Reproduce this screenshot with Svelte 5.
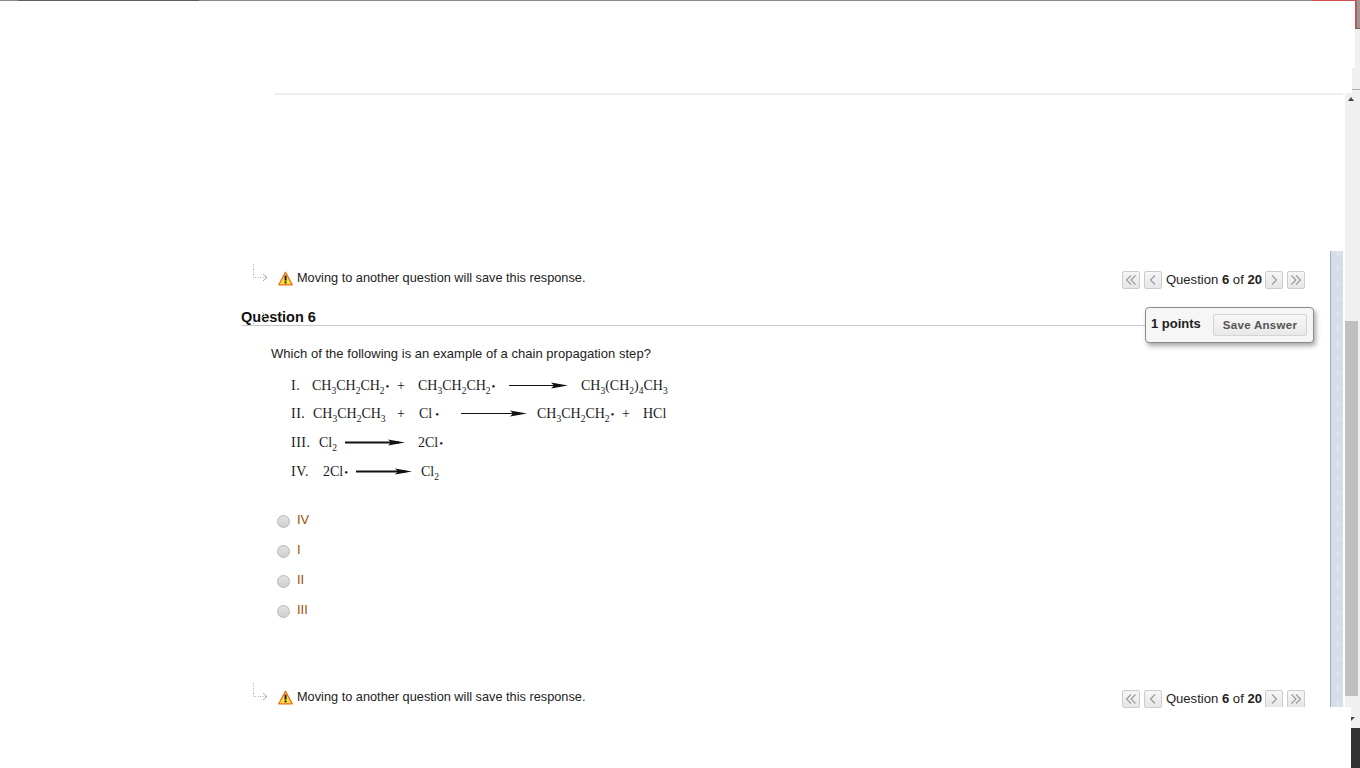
<script>
  const options = ['IV', 'I', 'II', 'III'];
</script>

{#snippet arrow(w, sw)}
  <svg class="arrow" width={w} height="9" viewBox="0 0 {w} 9" aria-hidden="true">
    <line x1="0" y1="4.5" x2={w - 6} y2="4.5" stroke="#111" stroke-width={sw} />
    <path d="M{w - 17} 1.5 L{w} 4.5 L{w - 17} 7.5 L{w - 14} 4.5 Z" fill="#111" />
  </svg>
{/snippet}

{#snippet nav()}
  <div class="nav">
    <div class="warn">
      <svg class="elbow" width="16" height="20" viewBox="0 0 16 20" aria-hidden="true">
        <path d="M1.5 0 V13.5 H14" fill="none" stroke="#aaa" stroke-dasharray="1 1.5" />
        <path d="M11 10 L15 13.5 L11 17" fill="none" stroke="#aaa" />
      </svg>
      <svg class="tri" width="15" height="15" viewBox="0 0 15 15" aria-hidden="true">
        <path d="M7.5 1.2 L14.2 13.8 H0.8 Z" fill="#ffdf3c" stroke="#ee6a1a" stroke-width="1.3" stroke-linejoin="round" />
        <rect x="6.6" y="4.6" width="1.9" height="5" fill="#111" />
        <rect x="6.6" y="10.5" width="1.9" height="1.9" fill="#111" />
      </svg>
      <span>Moving to another question will save this response.</span>
    </div>
    <div class="pager">
      <button class="pg" aria-label="First">
        <svg width="12" height="12" viewBox="0 0 12 12"><path d="M6 1.5 L1.5 6 L6 10.5 M10.5 1.5 L6 6 L10.5 10.5" fill="none" stroke="#999" stroke-width="1.1" /></svg>
      </button>
      <button class="pg" aria-label="Previous">
        <svg width="12" height="12" viewBox="0 0 12 12"><path d="M8 1.5 L3.5 6 L8 10.5" fill="none" stroke="#999" stroke-width="1.1" /></svg>
      </button>
      <span class="count">Question <b>6</b> of <b>20</b></span>
      <button class="pg" aria-label="Next">
        <svg width="12" height="12" viewBox="0 0 12 12"><path d="M4 1.5 L8.5 6 L4 10.5" fill="none" stroke="#999" stroke-width="1.1" /></svg>
      </button>
      <button class="pg" aria-label="Last">
        <svg width="12" height="12" viewBox="0 0 12 12"><path d="M1.5 1.5 L6 6 L1.5 10.5 M6 1.5 L10.5 6 L6 10.5" fill="none" stroke="#999" stroke-width="1.1" /></svg>
      </button>
    </div>
  </div>
{/snippet}

<div class="page">
  <div class="topline"></div>
  <div class="rule"></div>

  <main class="main">
    {@render nav()}

    <div class="qhead">
      <h2 class="qtitle">Question 6</h2>
      <div class="points">
        <strong>1 points</strong>
        <button class="save">Save Answer</button>
      </div>
    </div>

    <p class="qtext">Which of the following is an example of a chain propagation step?</p>

    <div class="chem">
      <div class="row r1">
        <span>I.</span><span>CH<sub>3</sub>CH<sub>2</sub>CH<sub>2</sub><i>•</i></span><span>+</span><span>CH<sub>3</sub>CH<sub>2</sub>CH<sub>2</sub><i>•</i></span>
        {@render arrow(59, 1)}
        <span>CH<sub>3</sub>(CH<sub>2</sub>)<sub>4</sub>CH<sub>3</sub></span>
      </div>
      <div class="row r2">
        <span>II.</span><span>CH<sub>3</sub>CH<sub>2</sub>CH<sub>3</sub></span><span>+</span><span>Cl<i class="far">•</i></span>
        {@render arrow(66, 1)}
        <span>CH<sub>3</sub>CH<sub>2</sub>CH<sub>2</sub><i>•</i></span><span>+</span><span>HCl</span>
      </div>
      <div class="row r3">
        <span>III.</span><span>Cl<sub>2</sub></span>
        {@render arrow(60, 2)}
        <span>2Cl<i>•</i></span>
      </div>
      <div class="row r4">
        <span>IV.</span><span>2Cl<i>•</i></span>
        {@render arrow(56, 2)}
        <span>Cl<sub>2</sub></span>
      </div>
    </div>

    <ul class="options">
      {#each options as o}
        <li><input type="radio" name="q6" aria-label={o} /><label for="">{o}</label></li>
      {/each}
    </ul>

    {@render nav()}
  </main>

  <!-- stray dotted fragment lying over the question title -->
  <svg class="stray" width="16" height="16" viewBox="0 0 16 16" aria-hidden="true">
    <path d="M1.5 8 V15" fill="none" stroke="#999" stroke-dasharray="1 1.5" />
    <path d="M10 2 L13 5 L10 8" fill="none" stroke="#bbb" />
  </svg>

  <!-- browser and frame remnants at the right edge -->
  <div class="track"></div>
  <div class="strip">
    <svg width="13" height="456" aria-hidden="true">
      <defs>
        <pattern id="plus" width="13" height="15" patternUnits="userSpaceOnUse">
          <path d="M8 -1 V6 M4.5 2.5 H11.5" stroke="#dfe4ec" stroke-width="2" />
          <path d="M8 14 V16 M4.5 17.5 H11.5" stroke="#dfe4ec" stroke-width="2" />
        </pattern>
      </defs>
      <rect width="13" height="456" fill="#d5dde9" />
      <rect width="13" height="456" fill="url(#plus)" />
      <rect width="1" height="456" fill="#a9aeb6" />
    </svg>
  </div>
  <div class="thumb"></div>
  <div class="corner"></div>
  <div class="redtop"></div>
  <div class="redside"></div>
  <div class="notch"></div>
  <div class="greyline"></div>
  <div class="up"></div>
  <div class="foot"></div>
  <div class="down"></div>
  <div class="dark"></div>
</div>

<style>
  :global(body) {
    margin: 0;
    background: #fff;
  }
  .page {
    position: relative;
    width: 1360px;
    height: 768px;
    overflow: hidden;
    background: #fff;
    font-family: "Liberation Sans", Arial, sans-serif;
    font-size: 13px;
    color: #222;
  }
  .topline {
    height: 1px;
    background: linear-gradient(to right, #8a8a8a 18px, #5f5f5f 18px, #5f5f5f 199px, #8a8a8a 199px);
  }
  .rule {
    height: 2px;
    margin: 92px 0 0 274px;
    width: 1069px;
    background: #efefef;
  }
  .main {
    width: 1073px;
    margin: 175px 0 0 241px;
  }
  .nav {
    display: flex;
    justify-content: space-between;
    height: 20px;
    padding: 0 9px 0 11px;
  }
  .warn {
    display: flex;
    align-items: flex-start;
    line-height: 15px;
  }
  .warn span {
    margin: 0 0 0 4px;
    font-size: 12.75px;
  }
  .elbow {
    margin: -6px 10px 0 0;
  }
  .tri {
    margin-top: 1px;
  }
  .pager {
    display: flex;
    align-items: center;
    gap: 4px;
  }
  .count {
    margin-top: -1px;
    margin-right: -1px;
    font-size: 13.1px;
    white-space: nowrap;
  }
  .count b {
    font-weight: 700;
  }
  .pg {
    box-sizing: border-box;
    display: flex;
    align-items: center;
    justify-content: center;
    width: 18px;
    height: 18px;
    padding: 0;
    border: 1px solid #ccc;
    border-radius: 2px;
    background: linear-gradient(#f6f6f6, #e6e6e6);
  }
  .qhead {
    display: flex;
    align-items: flex-start;
    height: 36px;
    margin-top: 17px;
  }
  .qtitle {
    flex: 1;
    margin: 3px 0 0;
    height: 15px;
    border-bottom: 1px solid #c8c8c8;
    font-size: 14.5px;
    line-height: 15px;
    font-weight: 700;
    color: #111;
  }
  .points {
    box-sizing: border-box;
    display: flex;
    align-items: center;
    justify-content: space-between;
    width: 169px;
    height: 36px;
    padding: 0 6px 0 5px;
    border: 1px solid #8c8c8c;
    border-radius: 4px;
    background: #f6f6f6;
    box-shadow: 2px 3px 5px rgba(0, 0, 0, 0.35);
    color: #222;
  }
  .points strong {
    font-size: 13px;
    margin-top: -4px;
  }
  .save {
    box-sizing: border-box;
    width: 94px;
    height: 22px;
    padding: 0;
    border: 1px solid #d4d4d4;
    border-radius: 2px;
    background: linear-gradient(#f7f7f7, #e9e9e9);
    font: 700 11.5px "Liberation Sans", Arial, sans-serif;
    letter-spacing: 0.3px;
    color: #555;
  }
  .qtext {
    margin: 3px 0 0 30px;
    line-height: 15px;
    letter-spacing: 0.03px;
  }
  .chem {
    margin: 10px 0 0 50px;
    font-family: "Liberation Serif", "Times New Roman", serif;
    font-size: 14px;
    color: #1c1c1c;
  }
  .row {
    display: grid;
    align-items: center;
    height: 29px;
    white-space: nowrap;
  }
  .row span:first-child {
    letter-spacing: 0.5px;
  }
  .row sub {
    font-size: 9.5px;
    line-height: 0;
  }
  .row i {
    font-style: normal;
    font-size: 11px;
    margin-left: 1px;
  }
  .row i.far {
    margin-left: 3px;
  }
  .r1 {
    grid-template-columns: 21px 85px 21px 91px 72px auto;
  }
  .r2 {
    margin-top: -1px;
    grid-template-columns: 22px 84px 22px 42px 76px 85px 21px auto;
  }
  .r3 {
    grid-template-columns: 28px 26px 73px auto;
  }
  .r4 {
    grid-template-columns: 32px 33px 65px auto;
  }
  .arrow {
    display: block;
  }
  .options {
    list-style: none;
    margin: 20px 0 0 36px;
    padding: 0;
  }
  .options li {
    display: flex;
    align-items: center;
    height: 30px;
  }
  .options input {
    appearance: none;
    box-sizing: border-box;
    width: 13px;
    height: 13px;
    margin: 1px 7px 0 0;
    border: 1px solid #b8b8b8;
    border-radius: 50%;
    background: linear-gradient(#e2e2e2, #cfcfcf);
  }
  .options label {
    margin-top: -4px;
    color: #a04e06;
  }
  .options + .nav {
    margin-top: 63px;
  }
  .stray {
    position: absolute;
    left: 252px;
    top: 310px;
  }
  .track {
    position: absolute;
    left: 1345px;
    top: 0;
    width: 15px;
    height: 768px;
    background: #f0f0f0;
  }
  .strip {
    position: absolute;
    left: 1330px;
    top: 251px;
    width: 13px;
    height: 456px;
  }
  .strip svg {
    display: block;
  }
  .thumb {
    position: absolute;
    left: 1345px;
    top: 321px;
    width: 13px;
    height: 375px;
    background: #c0bebe;
  }
  .corner {
    position: absolute;
    left: 1345px;
    top: 0;
    width: 10px;
    height: 68px;
    background: #fff;
  }
  .notch {
    position: absolute;
    left: 1345px;
    top: 68px;
    width: 7px;
    height: 25px;
    background: #fff;
  }
  .redtop {
    position: absolute;
    left: 1312px;
    top: 0;
    width: 44px;
    height: 1px;
    background: #d05050;
  }
  .redside {
    position: absolute;
    left: 1355px;
    top: 0;
    width: 5px;
    height: 28px;
    background: linear-gradient(to right, #d05050 2px, #999 2px);
    border-bottom: 1px solid #666;
    box-sizing: content-box;
  }
  .greyline {
    position: absolute;
    left: 1352px;
    top: 89px;
    width: 8px;
    height: 1px;
    background: #aaa;
  }
  .up {
    position: absolute;
    left: 1348px;
    top: 97px;
    border-left: 3.5px solid transparent;
    border-right: 3.5px solid transparent;
    border-bottom: 4px solid #444;
  }
  .foot {
    position: absolute;
    left: 1243px;
    top: 707px;
    width: 108px;
    height: 61px;
    background: #fff;
  }
  .down {
    position: absolute;
    left: 1351px;
    top: 717px;
    width: 0;
    border-top: 4px solid #444;
    border-right: 4px solid transparent;
  }
  .dark {
    position: absolute;
    left: 1351px;
    top: 728px;
    width: 9px;
    height: 40px;
    background: #333;
  }
</style>
